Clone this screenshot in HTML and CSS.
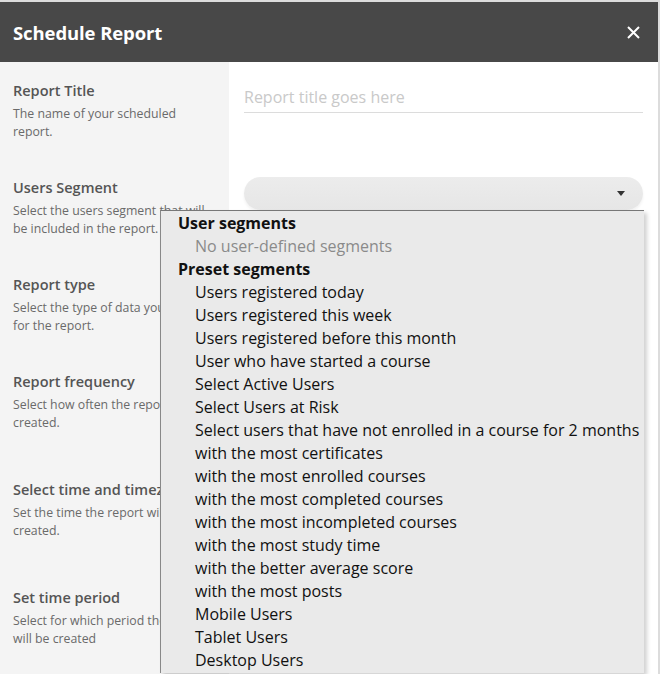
FILE: index.html
```html
<!DOCTYPE html>
<html>
<head>
<meta charset="utf-8">
<link rel="stylesheet" href="styles.css">
</head>
<body>
<div class="modal">
  <header class="modal-header">
    <h1 class="modal-title">Schedule Report</h1>
    <button class="close-btn" aria-label="Close">
      <svg width="13" height="13" viewBox="0 0 13 13"><path d="M1 1L12 12M12 1L1 12" stroke="#fff" stroke-width="2" fill="none"/></svg>
    </button>
  </header>
  <div class="form">
    <div class="row">
      <div class="label-cell">
        <div class="label">Report Title</div>
        <div class="desc">The name of your scheduled<br>report.</div>
      </div>
      <div class="control-cell">
        <div class="text-input">Report title goes here</div>
      </div>
    </div>
    <div class="row">
      <div class="label-cell">
        <div class="label">Users Segment</div>
        <div class="desc">Select the users segment that will<br>be included in the report.</div>
      </div>
      <div class="control-cell">
        <div class="select">
          <span class="select-arrow"></span>
          <div class="dropdown">
            <div class="group">User segments</div>
            <div class="opt disabled">No user-defined segments</div>
            <div class="group">Preset segments</div>
            <div class="opt">Users registered today</div>
            <div class="opt">Users registered this week</div>
            <div class="opt">Users registered before this month</div>
            <div class="opt">User who have started a course</div>
            <div class="opt">Select Active Users</div>
            <div class="opt">Select Users at Risk</div>
            <div class="opt">Select users that have not enrolled in a course for 2 months</div>
            <div class="opt">with the most certificates</div>
            <div class="opt">with the most enrolled courses</div>
            <div class="opt">with the most completed courses</div>
            <div class="opt">with the most incompleted courses</div>
            <div class="opt">with the most study time</div>
            <div class="opt">with the better average score</div>
            <div class="opt">with the most posts</div>
            <div class="opt">Mobile Users</div>
            <div class="opt">Tablet Users</div>
            <div class="opt">Desktop Users</div>
          </div>
        </div>
      </div>
    </div>
    <div class="row">
      <div class="label-cell">
        <div class="label">Report type</div>
        <div class="desc">Select the type of data you want<br>for the report.</div>
      </div>
      <div class="control-cell"></div>
    </div>
    <div class="row">
      <div class="label-cell tall">
        <div class="label">Report frequency</div>
        <div class="desc">Select how often the report will be<br>created.</div>
      </div>
      <div class="control-cell"></div>
    </div>
    <div class="row">
      <div class="label-cell tall">
        <div class="label">Select time and timezone</div>
        <div class="desc">Set the time the report will be<br>created.</div>
      </div>
      <div class="control-cell"></div>
    </div>
    <div class="row">
      <div class="label-cell">
        <div class="label">Set time period</div>
        <div class="desc">Select for which period the report<br>will be created</div>
      </div>
      <div class="control-cell"></div>
    </div>
  </div>
</div>
</body>
</html>
```

FILE: styles.css
```css
html, body {
  margin: 0;
  padding: 0;
  height: 100%;
  overflow: hidden;
}
body {
  background: #dcdcdc;
  font-family: "Open Sans", "Noto Sans", sans-serif;
  padding-top: 2px;
  box-sizing: border-box;
}
.modal {
  width: 658px;
  height: 672px;
  background: #fff;
  display: flex;
  flex-direction: column;
  overflow: hidden;
}
.modal-header {
  height: 60px;
  flex: none;
  background: #484848;
  display: flex;
  align-items: center;
  justify-content: space-between;
  padding: 0 18px 0 13px;
}
.modal-title {
  margin: 0;
  color: #fff;
  font-size: 18.5px;
  font-weight: 700;
  letter-spacing: -0.1px;
}
.close-btn {
  background: none;
  border: 0;
  padding: 0;
  width: 13px;
  height: 13px;
  display: flex;
}
.form {
  flex: 1;
  display: flex;
  flex-direction: column;
  background: linear-gradient(to right, #f4f4f4 229px, #fff 229px);
}
.row {
  display: grid;
  grid-template-columns: 229px 1fr;
}
.label-cell {
  padding: 19px 8px 18px 13px;
  overflow: hidden;
}
.label-cell.tall {
  padding-bottom: 29px;
}
.label {
  font-size: 14.5px;
  font-weight: 600;
  color: #555;
  line-height: 20px;
  white-space: nowrap;
}
.desc {
  margin-top: 4px;
  font-size: 12.3px;
  line-height: 18px;
  color: #6a6a6a;
  white-space: nowrap;
}
.control-cell {
  padding: 0 15px;
}
.text-input {
  margin-top: 22px;
  height: 28px;
  border-bottom: 1px solid #dcdcdc;
  color: #c9c9c9;
  font-size: 16px;
  line-height: 26px;
}
.select {
  position: relative;
  margin-top: 18px;
  height: 33px;
  border-radius: 17px;
  background: linear-gradient(#ececec, #e6e6e6);
  box-shadow: 0 2px 3px rgba(0,0,0,0.06);
}
.select-arrow {
  position: absolute;
  right: 18px;
  top: 14px;
  width: 0;
  height: 0;
  border-left: 4px solid transparent;
  border-right: 4px solid transparent;
  border-top: 5px solid #333;
}
.dropdown {
  position: absolute;
  top: 33px;
  left: -84px;
  right: -1px;
  height: 461px;
  background: #eaeaea;
  border-top: 1px solid #777;
  border-left: 1px solid #888;
  box-shadow: 3px 3px 4px rgba(0,0,0,0.18);
  padding-top: 1px;
  z-index: 10;
  font-size: 16px;
  line-height: 23px;
  color: #111;
  white-space: nowrap;
}
.group {
  font-weight: 700;
  padding-left: 17px;
}
.opt {
  padding-left: 34px;
}
.opt.disabled {
  color: #8a8a8a;
}
```
